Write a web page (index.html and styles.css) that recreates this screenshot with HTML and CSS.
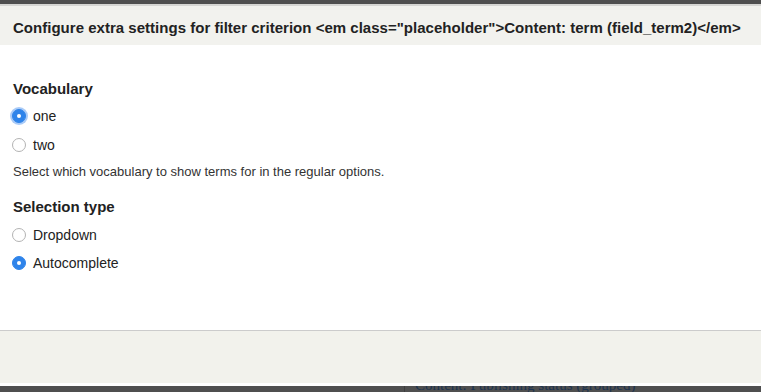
FILE: index.html
```html
<!DOCTYPE html>
<html>
<head>
<meta charset="utf-8">
<link rel="stylesheet" href="styles.css">
</head>
<body>
<div class="dialog">
  <div class="topbar"></div>
  <div class="titlebar">
    <h1 class="title">Configure extra settings for filter criterion &lt;em class="placeholder"&gt;Content: term (field_term2)&lt;/em&gt;</h1>
  </div>
  <div class="content">
    <fieldset class="group group-first">
      <div class="legend">Vocabulary</div>
      <label class="option"><span class="radio checked focused"></span><span class="label">one</span></label>
      <label class="option"><span class="radio"></span><span class="label">two</span></label>
      <div class="description">Select which vocabulary to show terms for in the regular options.</div>
    </fieldset>
    <fieldset class="group group-second">
      <div class="legend">Selection type</div>
      <label class="option"><span class="radio"></span><span class="label">Dropdown</span></label>
      <label class="option"><span class="radio checked"></span><span class="label">Autocomplete</span></label>
    </fieldset>
  </div>
  <div class="footer"></div>
  <div class="gap"></div>
  <div class="underbar">
    <div class="undercol"></div>
    <div class="undertext">Content: Publishing status (grouped)</div>
  </div>
</div>
</body>
</html>
```
FILE: styles.css
```css
html, body {
  margin: 0;
  padding: 0;
  background: #ffffff;
}
body {
  font-family: "Liberation Sans", Arial, sans-serif;
  color: #222222;
  width: 761px;
  height: 392px;
  overflow: hidden;
}
.dialog {
  display: flex;
  flex-direction: column;
  height: 392px;
}
.topbar {
  height: 4px;
  background: #4f4f4f;
  border-bottom: 2px solid #d6d6d3;
  flex: none;
}
.titlebar {
  flex: none;
  height: 39px;
  background: #f2f2ee;
  padding: 0 13px;
  display: flex;
  align-items: center;
}
.title {
  margin: 4px 0 0 0;
  font-size: 15px;
  font-weight: bold;
  color: #222222;
  white-space: nowrap;
  letter-spacing: 0.02px;
}
.content {
  flex: 1;
  padding: 35px 13px 0 13px;
}
.group {
  border: 0;
  margin: 0;
  padding: 0;
}
.group-second {
  margin-top: 19px;
}
.legend {
  font-size: 15px;
  font-weight: bold;
  line-height: 17px;
  color: #222222;
  margin-bottom: 4px;
}
.group-second .legend {
  margin-bottom: 6px;
}
.option {
  display: flex;
  align-items: center;
  height: 29px;
  font-size: 14px;
  color: #222222;
}
.group-second .option {
  height: 28px;
}
.radio {
  box-sizing: border-box;
  width: 14px;
  height: 14px;
  border-radius: 50%;
  border: 1px solid #b3b3b3;
  background: #ffffff;
  margin: 0 7px 0 -1px;
  display: flex;
  align-items: center;
  justify-content: center;
  flex: none;
}
.radio.checked {
  background: #2f84ea;
  border-color: #2f84ea;
}
.radio.checked::after {
  content: "";
  width: 4px;
  height: 4px;
  border-radius: 50%;
  background: #ffffff;
}
.radio.focused {
  box-shadow: 0 0 0 2px rgba(100, 160, 240, 0.55);
}
.description {
  font-size: 13px;
  color: #333333;
  line-height: 15px;
  margin-top: 5px;
}
.footer {
  flex: none;
  height: 52px;
  background: #f2f2ec;
  border-top: 1px solid #cccccc;
}
.gap {
  flex: none;
  height: 3px;
  background: #ffffff;
}
.underbar {
  flex: none;
  height: 6px;
  background: #4f4f4f;
  display: flex;
  overflow: hidden;
}
.undercol {
  width: 404px;
  border-right: 1px solid #3e3e3e;
  flex: none;
}
.undertext {
  font-family: "Liberation Serif", serif;
  font-size: 15px;
  color: #1d3450;
  line-height: 12px;
  margin-top: -7px;
  padding-left: 10px;
  white-space: nowrap;
}
```
